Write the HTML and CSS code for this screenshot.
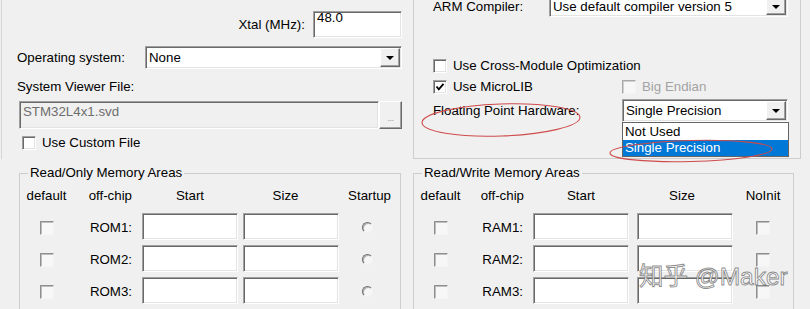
FILE: index.html
```html
<!DOCTYPE html>
<html>
<head>
<meta charset="utf-8">
<link rel="stylesheet" href="styles.css">
</head>
<body>
<div class="page">
  <div class="top">
    <section class="pane-left">
      <div class="row row-xtal">
        <span class="lbl">Xtal (MHz):</span>
        <div class="edit edit-xtal"><span class="val">48.0</span></div>
      </div>
      <div class="row row-os">
        <span class="lbl">Operating system:</span>
        <div class="combo combo-os"><span class="combo-text">None</span><span class="arrow-btn"><i class="tri"></i></span></div>
      </div>
      <div class="lbl lbl-svf">System Viewer File:</div>
      <div class="row row-svf">
        <div class="edit edit-svf disabled"><span class="val">STM32L4x1.svd</span></div>
        <div class="btn-browse">...</div>
      </div>
      <div class="check-row row-custom"><span class="cb"></span><span>Use Custom File</span></div>
    </section>
    <section class="pane-right">
      <div class="row row-compiler">
        <span class="lbl lbl-compiler">ARM Compiler:</span>
        <div class="combo combo-compiler"><span class="combo-text">Use default compiler version 5</span><span class="arrow-btn"><i class="tri"></i></span></div>
      </div>
      <div class="check-row row-cross"><span class="cb"></span><span>Use Cross-Module Optimization</span></div>
      <div class="row-grid row-micro">
        <div class="check-row"><span class="cb"><svg width="12" height="12" viewBox="0 0 12 12"><polyline points="2.5,5.5 4.8,8.3 9.5,2.8" fill="none" stroke="#000" stroke-width="1.8"/></svg></span><span>Use MicroLIB</span></div>
        <div class="check-row dim"><span class="cb cb-dis"></span><span>Big Endian</span></div>
      </div>
      <div class="row-grid row-fp">
        <span class="lbl">Floating Point Hardware:</span>
        <div class="fp-wrap">
          <div class="combo combo-fp"><span class="combo-text">Single Precision</span><span class="arrow-btn"><i class="tri"></i></span></div>
          <ul class="droplist">
            <li class="opt">Not Used</li>
            <li class="opt sel">Single Precision</li>
          </ul>
        </div>
      </div>
    </section>
  </div>

  <div class="bottom">
    <fieldset class="group group-ro">
      <legend>Read/Only Memory Areas</legend>
      <div class="mem-grid grid-ro">
        <span class="hd hd-c">default</span>
        <span class="hd hd-r">off-chip</span>
        <span class="hd hd-c">Start</span>
        <span class="hd hd-c hd-size">Size</span>
        <span class="hd hd-c">Startup</span>

        <span class="cell-c"><span class="cb cb-dis"></span></span>
        <span class="rlabel">ROM1:</span>
        <div class="edit mem-edit"></div>
        <div class="edit mem-edit end"></div>
        <span class="cell-c"><span class="radio"></span></span>

        <span class="cell-c"><span class="cb cb-dis"></span></span>
        <span class="rlabel">ROM2:</span>
        <div class="edit mem-edit"></div>
        <div class="edit mem-edit end"></div>
        <span class="cell-c"><span class="radio"></span></span>

        <span class="cell-c"><span class="cb cb-dis"></span></span>
        <span class="rlabel">ROM3:</span>
        <div class="edit mem-edit"></div>
        <div class="edit mem-edit end"></div>
        <span class="cell-c"><span class="radio"></span></span>
      </div>
    </fieldset>
    <fieldset class="group group-rw">
      <legend>Read/Write Memory Areas</legend>
      <div class="mem-grid grid-rw">
        <span class="hd hd-c">default</span>
        <span class="hd hd-r">off-chip</span>
        <span class="hd hd-c">Start</span>
        <span class="hd hd-c hd-size2">Size</span>
        <span class="hd hd-c">NoInit</span>

        <span class="cell-c"><span class="cb cb-dis"></span></span>
        <span class="rlabel">RAM1:</span>
        <div class="edit mem-edit"></div>
        <div class="edit mem-edit end"></div>
        <span class="cell-c"><span class="cb cb-dis"></span></span>

        <span class="cell-c"><span class="cb cb-dis"></span></span>
        <span class="rlabel">RAM2:</span>
        <div class="edit mem-edit"></div>
        <div class="edit mem-edit end"></div>
        <span class="cell-c"><span class="cb cb-dis"></span></span>

        <span class="cell-c"><span class="cb cb-dis"></span></span>
        <span class="rlabel">RAM3:</span>
        <div class="edit mem-edit"></div>
        <div class="edit mem-edit end"></div>
        <span class="cell-c"><span class="cb cb-dis"></span></span>
      </div>
    </fieldset>
  </div>

  <svg class="marks" width="810" height="309" viewBox="0 0 810 309">
    <ellipse cx="501" cy="120" rx="79" ry="16" transform="rotate(-2 501 120)" fill="none" stroke="#cf4a4a" stroke-width="1.1"/>
    <ellipse cx="691" cy="151" rx="81" ry="10.5" transform="rotate(-1.5 691 151)" fill="none" stroke="#cf4a4a" stroke-width="1.1"/>
  </svg>
  <div class="watermark"><span class="wm-cjk">知乎</span> @Maker</div>
</div>
</body>
</html>
```

FILE: styles.css
```css
* { box-sizing: border-box; }
html, body { margin: 0; padding: 0; }
body {
  background: #f0f0f0;
  font-family: "Liberation Sans", Arial, sans-serif;
  font-size: 13.3px;
  line-height: 16px;
  color: #000;
  width: 810px;
  height: 309px;
  overflow: hidden;
}
.page { position: relative; width: 810px; height: 309px; overflow: hidden; }

.lbl { white-space: nowrap; }
.row { display: flex; align-items: center; }

/* sunken edit */
.edit {
  background: #fff;
  border: 1px solid;
  border-color: #a0a0a0 #fff #fff #a0a0a0;
  box-shadow: inset 1px 1px 0 #696969, inset -1px -1px 0 #e3e3e3;
  padding: 0 3px;
  white-space: nowrap;
  overflow: hidden;
}
.edit .val { display: block; line-height: 15px; }
.edit.disabled { background: #f0f0f0; color: #6d6d6d; }

/* combo box */
.combo {
  display: flex;
  align-items: stretch;
  background: #fff;
  border: 1px solid;
  border-color: #a0a0a0 #fff #fff #a0a0a0;
  box-shadow: inset 1px 1px 0 #696969, inset -1px -1px 0 #e3e3e3;
  padding: 1px;
}
.combo-text { flex: 1; padding-left: 2px; display: flex; align-items: center; white-space: nowrap; overflow: hidden; }
.arrow-btn {
  width: 20px;
  display: flex;
  align-items: center;
  justify-content: center;
  background: #f0f0f0;
  border: 1px solid;
  border-color: #fff #696969 #696969 #fff;
  box-shadow: inset -1px -1px 0 #a0a0a0;
}
.tri {
  width: 0; height: 0;
  border-left: 4px solid transparent;
  border-right: 4px solid transparent;
  border-top: 4px solid #000;
  margin-top: 1px;
}

/* checkbox */
.check-row { display: flex; align-items: center; gap: 6px; height: 16px; white-space: nowrap; }
.cb {
  width: 14px; height: 14px; flex: none;
  background: #fff;
  border: 1px solid;
  border-color: #a0a0a0 #fff #fff #a0a0a0;
  box-shadow: inset 1px 1px 0 #696969, inset -1px -1px 0 #e3e3e3;
  display: flex; align-items: center; justify-content: center;
}
.cb svg { display: block; }
.cb-dis {
  background: #f7f7f7;
  border-color: #8e8e8e #f4f4f4 #f4f4f4 #8e8e8e;
  box-shadow: inset 1px 1px 0 #bdbdbd;
}
.dim { color: #a3a3a3; }
.dim .cb-dis { border-color: #a8a8a8 #f4f4f4 #f4f4f4 #a8a8a8; box-shadow: inset 1px 1px 0 #cfcfcf; }

.radio {
  display: block;
  width: 11px; height: 11px;
  border-radius: 50%;
  border: 1px solid;
  border-color: #6e6e6e #f4f4f4 #f4f4f4 #6e6e6e;
  box-shadow: inset 1px 1px 0 #b4b4b4;
  background: #f6f6f6;
}

/* top area */
.top { display: flex; height: 159px; }
.pane-left {
  width: 412px;
  margin-left: 1px;
  border-left: 1px solid #d6d6d6;
  padding: 0 11px 0 15px;
  display: flex;
  flex-direction: column;
}
.row-xtal { margin-top: 11px; height: 27px; justify-content: flex-end; gap: 8px; }
.edit-xtal { width: 89px; height: 27px; }
.edit-xtal .val { line-height: 14px; margin-top: -1px; }
.row-os { margin-top: 8px; height: 23px; }
.combo-os { margin-left: auto; width: 257px; height: 23px; }
.lbl-svf { margin-top: 10px; }
.row-svf { margin-top: 6px; height: 28px; padding-left: 2px; }
.edit-svf { width: 360px; height: 28px; }
.edit-svf .val { padding-top: 2px; }
.btn-browse {
  width: 23px; height: 28px;
  background: #f0f0f0;
  border: 1px solid;
  border-color: #fff #696969 #696969 #fff;
  box-shadow: inset -1px -1px 0 #a0a0a0;
  color: #9a9a9a;
  font-size: 9px;
  line-height: 9px;
  text-align: center;
  padding-top: 12px;
  letter-spacing: -0.5px;
}
.row-custom { margin-top: 6px; padding-left: 5px; }

.pane-right {
  width: 388px;
  height: 164px;
  margin-top: -5px;
  border: 1px solid #cdcdcd;
  border-top: none;
  padding: 0 12px 0 19px;
}
.row-compiler { height: 22px; }
.lbl-compiler { margin-top: 2px; }
.combo-compiler { margin-left: auto; width: 239px; height: 22px; }
.combo-compiler .combo-text { line-height: 12px; align-items: flex-end; padding-bottom: 2px; overflow: visible; }
.row-cross { margin-top: 41px; }
.row-grid { display: grid; grid-template-columns: 189px 1fr; align-items: center; }
.row-micro { margin-top: 5px; height: 16px; }
.row-fp { margin-top: 4px; height: 23px; }
.fp-wrap { position: relative; }
.combo-fp { width: 166px; height: 23px; }
.droplist {
  position: absolute;
  left: 0; top: 23px;
  width: 167px; height: 35px;
  margin: 0; padding: 0;
  list-style: none;
  background: #fff;
  border: 1px solid #646464;
}
.opt { height: 17px; line-height: 17px; padding-left: 2px; }
.opt.sel { height: 16px; line-height: 16px; background: #0078d7; color: #fff; }

/* memory areas */
.bottom { display: flex; align-items: flex-start; margin-top: 6px; }
.group {
  margin: 0;
  padding: 0;
  min-width: 0;
  height: 200px;
  border: 1px solid #cdcdcd;
}
.group legend { margin-left: 8px; padding: 0 2px; line-height: 16px; }
.group-ro { margin-left: 19px; width: 382px; }
.group-rw { margin-left: 12px; width: 381px; }
.mem-grid {
  display: grid;
  margin-top: 7px;
  grid-template-rows: 20px 27px 27px 27px;
  row-gap: 5px;
  align-items: center;
}
.grid-ro { grid-template-columns: 53px 69px 96px 101px 1fr; }
.grid-rw { grid-template-columns: 53px 66px 96px 104px 1fr; }
.hd { align-self: start; white-space: nowrap; }
.hd-c { text-align: center; }
.hd-r { text-align: right; padding-right: 10px; }
.grid-rw .hd-r { padding-right: 9px; }
.hd-size { padding-right: 6px; }
.hd-size2 { padding-left: 2px; }
.rlabel { text-align: right; padding-right: 10px; padding-top: 3px; }
.cell-c { display: flex; justify-content: center; padding-top: 2px; }
.grid-ro .cell-c .radio { margin-right: 4px; }
.mem-edit { width: 96px; height: 27px; }
.mem-edit.end { justify-self: end; }

/* overlays */
.marks { position: absolute; left: 0; top: 0; pointer-events: none; }
.watermark {
  position: absolute;
  left: 639px;
  top: 261px;
  font-family: "Liberation Sans", "Noto Sans CJK SC", sans-serif;
  font-size: 24.5px;
  line-height: 28px;
  white-space: nowrap;
  color: rgba(255, 255, 255, 0.85);
  -webkit-text-stroke: 0.9px rgba(90, 90, 90, 0.7);
}
.wm-cjk { font-family: "Noto Sans CJK SC", sans-serif; }
```
